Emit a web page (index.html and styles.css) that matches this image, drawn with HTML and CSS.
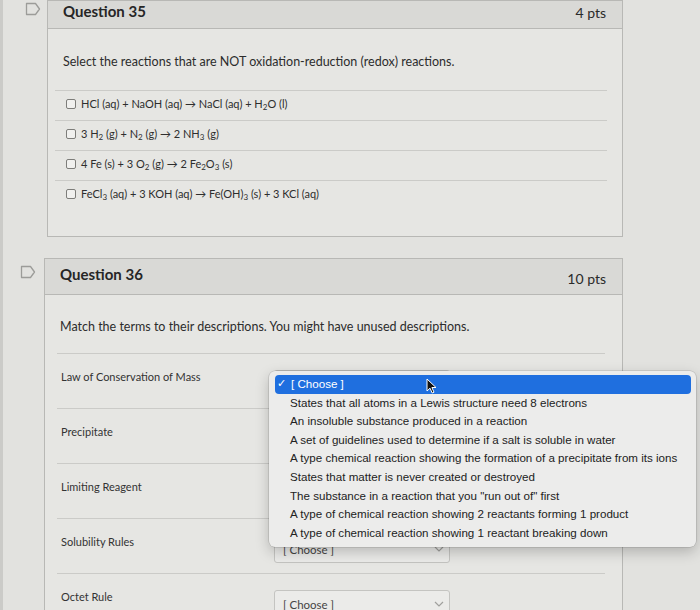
FILE: index.html
```html
<!DOCTYPE html>
<html>
<head>
<meta charset="utf-8">
<link rel="stylesheet" href="styles.css">
</head>
<body>
<div class="page">
  <section class="qrow q35">
    <svg class="flag" width="16" height="14" viewBox="0 0 16 14"><path d="M1.5 1.5 H10.5 L14.5 7 L10.5 12.5 H1.5 Z"/></svg>
    <div class="card">
      <div class="card-head">
        <h2 class="q-title">Question 35</h2>
        <span class="q-pts">4 pts</span>
      </div>
      <div class="card-body">
        <p class="q-text">Select the reactions that are NOT oxidation-reduction (redox) reactions.</p>
        <div class="answers">
          <div class="answer"><span class="box"></span><span class="formula">HCl (aq) + NaOH (aq) → NaCl (aq) + H<sub>2</sub>O (l)</span></div>
          <div class="answer"><span class="box"></span><span class="formula">3 H<sub>2</sub> (g) + N<sub>2</sub> (g) → 2 NH<sub>3</sub> (g)</span></div>
          <div class="answer"><span class="box"></span><span class="formula">4 Fe (s) + 3 O<sub>2</sub> (g) → 2 Fe<sub>2</sub>O<sub>3</sub> (s)</span></div>
          <div class="answer"><span class="box"></span><span class="formula">FeCl<sub>3</sub> (aq) + 3 KOH (aq) → Fe(OH)<sub>3</sub> (s) + 3 KCl (aq)</span></div>
        </div>
      </div>
    </div>
  </section>

  <section class="qrow q36">
    <svg class="flag" width="16" height="14" viewBox="0 0 16 14"><path d="M1.5 1.5 H10.5 L14.5 7 L10.5 12.5 H1.5 Z"/></svg>
    <div class="card">
      <div class="card-head">
        <h2 class="q-title">Question 36</h2>
        <span class="q-pts">10 pts</span>
      </div>
      <div class="card-body">
        <p class="q-text">Match the terms to their descriptions. You might have unused descriptions.</p>
        <div class="matches">
          <div class="match">
            <span class="term">Law of Conservation of Mass</span>
            <div class="select-wrap">
              <div class="select"></div>
              <div class="popup">
                <div class="opt sel"><span class="check">✓</span>[ Choose ]</div>
                <div class="opt">States that all atoms in a Lewis structure need 8 electrons</div>
                <div class="opt">An insoluble substance produced in a reaction</div>
                <div class="opt">A set of guidelines used to determine if a salt is soluble in water</div>
                <div class="opt">A type chemical reaction showing the formation of a precipitate from its ions</div>
                <div class="opt">States that matter is never created or destroyed</div>
                <div class="opt">The substance in a reaction that you "run out of" first</div>
                <div class="opt">A type of chemical reaction showing 2 reactants forming 1 product</div>
                <div class="opt">A type of chemical reaction showing 1 reactant breaking down</div>
                <svg class="cursor" width="11" height="16" viewBox="0 0 11 16"><path d="M1 1 L1 13 L4 10.2 L6.2 15 L8 14.2 L5.9 9.5 L10 9.5 Z"/></svg>
              </div>
            </div>
          </div>
          <div class="match">
            <span class="term">Precipitate</span>
            <div class="select-wrap"><div class="select"></div></div>
          </div>
          <div class="match">
            <span class="term">Limiting Reagent</span>
            <div class="select-wrap"><div class="select"></div></div>
          </div>
          <div class="match">
            <span class="term">Solubility Rules</span>
            <div class="select-wrap"><div class="select"><span>[ Choose ]</span><svg class="chev" width="10" height="6" viewBox="0 0 10 6"><polyline points="1,1 5,5 9,1"/></svg></div></div>
          </div>
          <div class="match">
            <span class="term">Octet Rule</span>
            <div class="select-wrap"><div class="select"><span>[ Choose ]</span><svg class="chev" width="10" height="6" viewBox="0 0 10 6"><polyline points="1,1 5,5 9,1"/></svg></div></div>
          </div>
        </div>
      </div>
    </div>
  </section>
</div>
</body>
</html>
```

FILE: styles.css
```css
html, body {
  margin: 0;
  padding: 0;
}
body {
  background: #e2e2df;
  font-family: Lato, "Open Sans", sans-serif;
  color: #2c2c2c;
}
.page {
  height: 610px;
  overflow: hidden;
  border-left: 3px solid #cbcbc8;
  box-sizing: border-box;
}
.qrow {
  display: flex;
  align-items: flex-start;
}
.flag {
  flex: none;
}
.flag path {
  fill: none;
  stroke: #9c9c99;
  stroke-width: 1.3;
  stroke-linejoin: round;
}
.q35 {
  padding-left: 22px;
}
.q35 .flag {
  margin-top: 2px;
  margin-right: 6px;
}
.q35 .card {
  width: 576px;
}
.q36 {
  padding-left: 17px;
  margin-top: 21px;
}
.q36 .flag {
  margin-top: 7px;
  margin-right: 8px;
}
.q36 .card {
  width: 579px;
}
.card {
  box-sizing: border-box;
  background: #e6e6e3;
  border: 1px solid #b8b8b5;
}
.card-head {
  display: flex;
  justify-content: space-between;
  align-items: flex-start;
  background: #d9d9d6;
  border-bottom: 1px solid #b8b8b5;
  padding: 0 16px 0 15px;
}
.q35 .card-head {
  height: 27px;
}
.q36 .card-head {
  height: 35px;
}
.q-title {
  margin: 0;
  font-size: 15px;
  line-height: 20px;
  font-weight: 700;
  color: #262626;
}
.q36 .q-title {
  padding-top: 5px;
}
.q-pts {
  font-size: 14px;
  line-height: 20px;
  color: #2a2a2a;
  margin-top: 2px;
}
.q36 .q-pts {
  margin-top: 10px;
}
.q-text {
  margin: 0;
  font-size: 12.5px;
  line-height: 16px;
  color: #2c2c2c;
}
.q35 .card-body {
  padding-bottom: 26px;
}
.q35 .q-text {
  padding: 25px 0 0 15px;
  margin-bottom: 20px;
}
.answers {
  margin: 0 15px 0 7px;
}
.answer {
  display: flex;
  align-items: center;
  border-top: 1px solid #cbcbc8;
  height: 29px;
}
.answer .box {
  width: 10px;
  height: 10px;
  box-sizing: border-box;
  border: 1px solid #7d7d7a;
  border-radius: 2px;
  background: #f0f0ee;
  margin: 0 5px 4px 11px;
  flex: none;
}
.formula {
  font-size: 11px;
  line-height: 16px;
  color: #2e2e2e;
  margin-bottom: 4px;
}
.formula sub {
  font-size: 8px;
  line-height: 0;
  vertical-align: -2px;
}
.q36 .q-text {
  padding: 24px 0 0 15px;
  margin-bottom: 18px;
}
.matches {
  margin: 0 17px 0 12px;
}
.match {
  display: flex;
  align-items: flex-start;
  border-top: 1px solid #cbcbc8;
  height: 54px;
}
.term {
  width: 213px;
  padding: 15px 0 0 4px;
  font-size: 11px;
  line-height: 16px;
  color: #333;
  flex: none;
}
.select-wrap {
  position: relative;
  margin-top: 16px;
}
.select {
  box-sizing: border-box;
  width: 176px;
  height: 28px;
  border: 1px solid #c4c4c1;
  border-radius: 3px;
  background: #ebebe9;
  display: flex;
  align-items: center;
  justify-content: space-between;
  padding: 0 5px 0 8px;
  font-size: 11.5px;
  color: #444;
}
.chev polyline {
  fill: none;
  stroke: #a0a09d;
  stroke-width: 1.2;
}
.popup {
  position: absolute;
  top: 1px;
  left: -5px;
  width: 427px;
  box-sizing: border-box;
  padding: 4px 5px 5px 6px;
  background: #ececeb;
  border-radius: 6px;
  box-shadow: 0 0 0 0.5px rgba(0, 0, 0, 0.18), 0 5px 14px rgba(0, 0, 0, 0.22);
  font-family: "Liberation Sans", Arial, sans-serif;
  font-size: 11.6px;
  color: #222;
  z-index: 5;
}
.opt {
  position: relative;
  height: 18.6px;
  line-height: 18.6px;
  padding-left: 15px;
  white-space: nowrap;
}
.opt.sel {
  background: #1f6fdf;
  color: #fff;
  border-radius: 4px;
  padding-left: 16px;
}
.check {
  position: absolute;
  left: 2px;
  top: 0;
  font-family: "DejaVu Sans", sans-serif;
  font-size: 11px;
  font-weight: 700;
}
.cursor {
  position: absolute;
  left: 157px;
  top: 7px;
}
.cursor path {
  fill: #111;
  stroke: #fff;
  stroke-width: 1;
  stroke-linejoin: round;
}
```
